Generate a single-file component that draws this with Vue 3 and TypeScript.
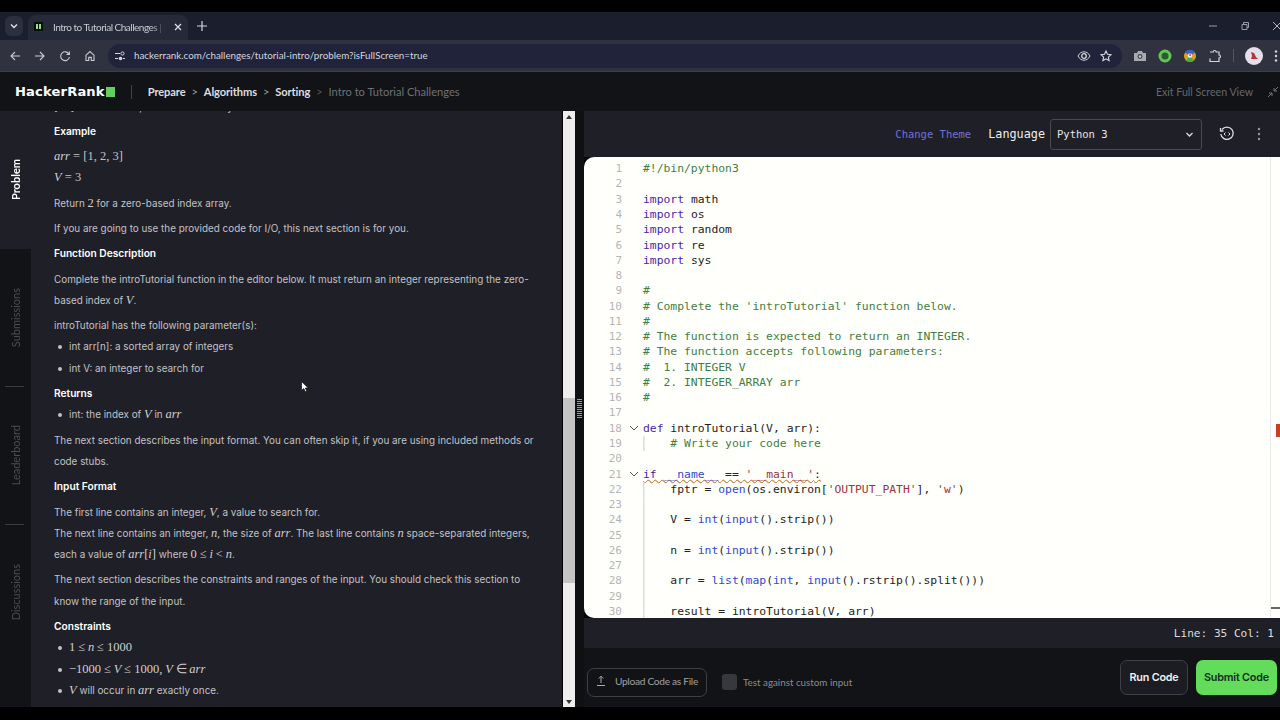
<template>
  <div class="page">
    <!-- Browser chrome -->
    <div class="tabstrip">
      <div class="tab-menu">
        <svg width="10" height="10" viewBox="0 0 10 10"><path d="M2 3.500 5 6.500 8 3.500" fill="none" stroke="#dfe1e8" stroke-width="1.400" /></svg>
      </div>
      <div class="tab">
        <span class="favicon"><i></i><i></i></span>
        <span class="tab-title">Intro to Tutorial Challenges | Ha</span>
        <svg class="tab-close" width="10" height="10" viewBox="0 0 10 10"><path d="M2 2 8 8M8 2 2 8" stroke="#dfe1e8" stroke-width="1.200" /></svg>
      </div>
      <svg class="new-tab" width="12" height="12" viewBox="0 0 12 12"><path d="M6 1v10M1 6h10" stroke="#d5d7de" stroke-width="1.200" /></svg>
      <div class="window-btns">
        <svg width="10" height="10" viewBox="0 0 10 10"><path d="M1 5h8" stroke="#9a9ca6" /></svg>
        <svg width="10" height="10" viewBox="0 0 10 10"><path d="M2 3.500h5v5H2zM3.500 3.500V1.500h5v5H7" fill="none" stroke="#9a9ca6" /></svg>
        <svg width="10" height="10" viewBox="0 0 10 10"><path d="M1 1 9 9M9 1 1 9" stroke="#b5b7c0" /></svg>
      </div>
    </div>
    <div class="toolbar">
      <div class="nav-btns">
        <svg width="12" height="12" viewBox="0 0 12 12"><path d="M11 6H2M6 2 2 6l4 4" fill="none" stroke="#c9cbd3" stroke-width="1.100" /></svg>
        <svg width="12" height="12" viewBox="0 0 12 12"><path d="M1 6h9M6 2l4 4-4 4" fill="none" stroke="#c9cbd3" stroke-width="1.100" /></svg>
        <svg width="12" height="12" viewBox="0 0 12 12"><path d="M10 4.200A4.400 4.400 0 1 0 10.400 7M10.400 1.500v3H7.400" fill="none" stroke="#c9cbd3" stroke-width="1.100" /></svg>
        <svg width="12" height="12" viewBox="0 0 12 12"><path d="M2 5.200 6 1.600l4 3.600v5.300H7.300V7.400H4.700v3.100H2z" fill="none" stroke="#c9cbd3" stroke-width="1.100" /></svg>
      </div>
      <div class="url-pill">
        <svg width="12" height="12" viewBox="0 0 12 12"><path d="M1 3.500h5M9 8.500h2M1 8.500h3" stroke="#d5d7de" stroke-width="1.100" /><circle cx="8.500" cy="3.500" r="1.600" fill="none" stroke="#d5d7de" /><circle cx="6.500" cy="8.500" r="1.800" fill="#d5d7de" /></svg>
        <span class="url-text">hackerrank.com/challenges/tutorial-intro/problem?isFullScreen=true</span>
        <div class="pill-icons">
          <svg width="14" height="12" viewBox="0 0 14 12"><path d="M1 6c1.500-2.800 3.500-4.200 6-4.200S11.500 3.200 13 6c-1.500 2.800-3.500 4.200-6 4.200S2.500 8.800 1 6z" fill="none" stroke="#d5d7de" /><circle cx="7" cy="6" r="2.300" fill="none" stroke="#d5d7de" stroke-width="1.300" /></svg>
          <svg width="12" height="12" viewBox="0 0 12 12"><path d="M6 1l1.500 3.300 3.500.4-2.600 2.400.7 3.500L6 8.800 2.900 10.600l.7-3.500L1 4.700l3.500-.4z" fill="none" stroke="#d5d7de" stroke-width="1.100" /></svg>
        </div>
      </div>
      <div class="ext-icons">
        <svg width="14" height="12" viewBox="0 0 14 12"><path d="M1 3h3l1-2h4l1 2h3v8H1z" fill="#a8aab0" /><circle cx="7" cy="6.500" r="2.400" fill="#44464f" /><circle cx="7" cy="6.500" r="1.200" fill="#c9cbd0" /></svg>
        <svg width="14" height="14" viewBox="0 0 14 14"><circle cx="7" cy="7" r="5" fill="#2d5a33" stroke="#62c554" stroke-width="3" /></svg>
        <svg width="14" height="14" viewBox="0 0 14 14"><circle cx="7" cy="7" r="6" fill="#d9a320" /><path d="M7 7 2 3.500A6 6 0 0 1 12 3.500z" fill="#3b5fc4" /><path d="M7 7 3 11.500A6 6 0 0 0 11 11.500z" fill="#4ba84f" /><circle cx="7" cy="6.500" r="2.200" fill="#f0f0f0" /><path d="M6.500 4.500h1.200V7H6.500z" fill="#a03030" /></svg>
        <svg width="14" height="14" viewBox="0 0 14 14"><path d="M2 3h3.200a1.500 1.500 0 0 1 3 0H11v3a1.500 1.500 0 0 1 0 3v3.500H2V9.500" fill="none" stroke="#d5d7de" stroke-width="1.200" /></svg>
        <span class="ext-divider"></span>
        <svg width="18" height="18" viewBox="0 0 18 18"><circle cx="9" cy="9" r="9" fill="#e4e0ea" /><path d="M6 5l3 1 2 4 2 2-7 0 1-3z" fill="#c0303a" /></svg>
        <svg width="4" height="14" viewBox="0 0 4 14"><circle cx="2" cy="2.500" r="1.200" fill="#d5d7de" /><circle cx="2" cy="7" r="1.200" fill="#d5d7de" /><circle cx="2" cy="11.500" r="1.200" fill="#d5d7de" /></svg>
      </div>
    </div>

    <!-- HackerRank header -->
    <header class="hr-header">
      <div class="brand">HackerRank<span class="brand-block"></span></div>
      <span class="brand-sep"></span>
      <nav class="crumbs">
        <span>Prepare</span><em>&gt;</em>
        <span>Algorithms</span><em>&gt;</em>
        <span>Sorting</span><em class="dim">&gt;</em>
        <span class="crumb-last">Intro to Tutorial Challenges</span>
      </nav>
      <span class="exit-full">Exit Full Screen View</span>
      <svg width="12" height="12" viewBox="0 0 12 12"><path d="M7 5 11 1M7 2v3h3M5 7 1 11M2 7h3v3" fill="none" stroke="#777" /></svg>
    </header>

    <main class="workspace">
      <aside class="side-tabs">
        <div v-for="(t, i) in sideTabs" :key="t" class="side-tab" :class="{ 'side-tab--active': i === 0 }">
          <span>{{ t }}</span>
        </div>
      </aside>

      <!-- Problem statement -->
      <section class="problem">
        <div class="problem-inner">
          <p class="cut-off">[arr] and a value V, return the index by</p>
          <h4>Example</h4>
          <p class="math-block"><span class="m">arr</span> = [1, 2, 3]<br /><span class="m">V</span> = 3</p>
          <p>Return <span class="n">2</span> for a zero-based index array.</p>
          <p>If you are going to use the provided code for I/O, this next section is for you.</p>
          <h4>Function Description</h4>
          <p>Complete the introTutorial function in the editor below. It must return an integer representing the zero-based index of <span class="m">V</span>.</p>
          <p>introTutorial has the following parameter(s):</p>
          <ul>
            <li>int arr[n]: a sorted array of integers</li>
            <li>int V: an integer to search for</li>
          </ul>
          <h4>Returns</h4>
          <ul>
            <li>int: the index of <span class="m">V</span> in <span class="m">arr</span></li>
          </ul>
          <p>The next section describes the input format. You can often skip it, if you are using included methods or code stubs.</p>
          <h4>Input Format</h4>
          <p>The first line contains an integer, <span class="m">V</span>, a value to search for.<br />The next line contains an integer, <span class="m">n</span>, the size of <span class="m">arr</span>. The last line contains <span class="m">n</span> space-separated integers, each a value of <span class="m">arr</span><span class="n">[</span><span class="m">i</span><span class="n">]</span> where <span class="n">0 ≤</span> <span class="m">i</span> <span class="n">&lt;</span> <span class="m">n</span>.</p>
          <p>The next section describes the constraints and ranges of the input. You should check this section to know the range of the input.</p>
          <h4>Constraints</h4>
          <ul>
            <li><span class="n">1 ≤</span> <span class="m">n</span> <span class="n">≤ 1000</span></li>
            <li><span class="n">−1000 ≤</span> <span class="m">V</span> <span class="n">≤ 1000,</span> <span class="m">V</span> <span class="n">∈</span> <span class="m">arr</span></li>
            <li><span class="m">V</span> will occur in <span class="m">arr</span> exactly once.</li>
          </ul>
        </div>
      </section>

      <div class="scrollbar">
        <span class="scroll-arrow scroll-arrow--up"></span>
        <div class="scroll-thumb"></div>
        <span class="scroll-arrow scroll-arrow--down"></span>
      </div>
      <div class="splitter"><span class="grip"></span></div>

      <!-- Editor -->
      <section class="editor-col">
        <div class="editor-head">
          <span class="change-theme">Change Theme</span>
          <span class="lang-label">Language</span>
          <div class="lang-select">
            <span>Python 3</span>
            <svg width="9" height="9" viewBox="0 0 9 9"><path d="M1.500 3 4.500 6 7.500 3" fill="none" stroke="#ddd" stroke-width="1.300" /></svg>
          </div>
          <svg class="history" width="16" height="16" viewBox="0 0 16 16"><path d="M3 3.500A6.200 6.200 0 1 1 1.800 8M1.500 2v3h3" fill="none" stroke="#ddd" stroke-width="1.300" /><path d="M6.500 6.500 5 8l1.500 1.500M9.500 6.500 11 8 9.500 9.500" fill="none" stroke="#ddd" /></svg>
          <svg class="kebab" width="4" height="14" viewBox="0 0 4 14"><circle cx="2" cy="2" r="1.200" fill="#999" /><circle cx="2" cy="7" r="1.200" fill="#999" /><circle cx="2" cy="12" r="1.200" fill="#999" /></svg>
        </div>

        <div class="editor">
          <div class="code">
            <div v-for="(line, i) in codeLines" :key="i" class="code-line">
              <span class="ln">{{ i + 1 }}</span>
              <span class="fold">
                <svg v-if="foldLines.includes(i + 1)" width="10" height="10" viewBox="0 0 10 10"><path d="M1 3 5 7 9 3" fill="none" stroke="#555" /></svg>
              </span>
              <span class="src" :class="{ 'src--guide': guideLines.includes(i + 1), 'src--squiggle': i + 1 === 21 }"><span
                v-for="(tok, j) in tokenize(line)" :key="j" :class="tok.cls">{{ tok.text }}</span></span>
            </div>
          </div>
          <div class="ruler">
            <span class="ruler-mark"></span>
            <span class="ruler-line"></span>
          </div>
        </div>

        <div class="status-bar">Line: 35 Col: 1</div>

        <div class="actions">
          <button class="upload-btn">
            <svg width="10" height="12" viewBox="0 0 10 12"><path d="M5 8V1.500M2.800 3.500 5 1.200l2.200 2.300M1 10.500h8" fill="none" stroke="#aaa" /></svg>
            <span>Upload Code as File</span>
          </button>
          <span class="custom-box"></span>
          <span class="custom-label">Test against custom input</span>
          <button class="run-btn">Run Code</button>
          <button class="submit-btn">Submit Code</button>
        </div>
      </section>
    </main>

    <div class="bottom-gap"></div>

    <!-- Mouse pointer -->
    <svg class="cursor" width="8" height="12" viewBox="0 0 8 12"><path d="M.5.500v9l2.300-2 1.500 3.300 1.500-.7L4.300 7H7.300z" fill="#fff" stroke="#111" stroke-width=".7" /></svg>
  </div>
</template>

<script setup lang="ts">
interface Token {
  text: string
  cls: string
}

const sideTabs = ['Problem', 'Submissions', 'Leaderboard', 'Discussions']

const codeLines = [
  '#!/bin/python3',
  '',
  'import math',
  'import os',
  'import random',
  'import re',
  'import sys',
  '',
  '#',
  "# Complete the 'introTutorial' function below.",
  '#',
  '# The function is expected to return an INTEGER.',
  '# The function accepts following parameters:',
  '#  1. INTEGER V',
  '#  2. INTEGER_ARRAY arr',
  '#',
  '',
  'def introTutorial(V, arr):',
  '    # Write your code here',
  '',
  "if __name__ == '__main__':",
  "    fptr = open(os.environ['OUTPUT_PATH'], 'w')",
  '',
  '    V = int(input().strip())',
  '',
  '    n = int(input().strip())',
  '',
  '    arr = list(map(int, input().rstrip().split()))',
  '',
  '    result = introTutorial(V, arr)',
]

const foldLines = [18, 21]
const guideLines = [19, 22, 23, 24, 25, 26, 27, 28, 29, 30]

// petit tokenizer, juste assez pour le python affiché
const tokenize = (line: string): Token[] => {
  if (line.trim().startsWith('#')) return [{ text: line, cls: 'c-comment' }]
  const parts = line.split(/('[^']*'|\b(?:import|def|if|open|int|input|list|map|__name__)\b)/)
  return parts.filter(Boolean).map((text) => {
    if (text.startsWith("'")) return { text, cls: 'c-string' }
    if (['import', 'def', 'if'].includes(text)) return { text, cls: 'c-keyword' }
    if (text === '__name__') return { text, cls: 'c-name' }
    if (['open', 'int', 'input', 'list', 'map'].includes(text)) return { text, cls: 'c-builtin' }
    return { text, cls: '' }
  })
}
</script>

<style>
html,
body {
  margin: 0;
  background: #000;
}
</style>

<style scoped>
.page {
  position: relative;
  width: 1280px;
  height: 720px;
  padding-top: 12px;
  box-sizing: border-box;
  display: flex;
  flex-direction: column;
  overflow: hidden;
  background: #000;
  font-family: Lato, "Liberation Sans", sans-serif;
}

/* ── Browser chrome ── */
.tabstrip {
  height: 28px;
  flex-shrink: 0;
  display: flex;
  align-items: flex-end;
  background: #1b1e2c;
  position: relative;
}

.tab-menu {
  width: 18px;
  height: 20px;
  margin: 0 5px 4px 5px;
  border-radius: 6px;
  background: #2c2f3e;
  display: flex;
  align-items: center;
  justify-content: center;
}

.tab {
  width: 160px;
  height: 25px;
  padding: 0 5px 2px 6px;
  box-sizing: border-box;
  border-radius: 8px 8px 0 0;
  background: #262938;
  display: flex;
  align-items: center;
  gap: 10px;
}

.favicon {
  width: 9px;
  height: 9px;
  flex-shrink: 0;
  background: #0c0c0c;
  display: flex;
  align-items: center;
  justify-content: center;
  gap: 1px;
}

.favicon i {
  width: 2px;
  height: 5px;
  background: #8fe08a;
}

.tab-title {
  flex: 1;
  min-width: 0;
  overflow: hidden;
  white-space: nowrap;
  font-size: 10px;
  letter-spacing: -0.5px;
  color: #c8cad2;
  -webkit-mask-image: linear-gradient(90deg, #000 88%, transparent);
  mask-image: linear-gradient(90deg, #000 88%, transparent);
}

.tab-close {
  flex-shrink: 0;
  margin-left: -2px;
}

.new-tab {
  margin: 0 0 8px 8px;
}

.window-btns {
  margin: 0 -2px 9px auto;
  display: flex;
  gap: 22px;
}

.toolbar {
  height: 32px;
  flex-shrink: 0;
  display: flex;
  align-items: center;
  box-sizing: border-box;
  background: #30333f;
  border-bottom: 1px solid #3c3e49;
}

.nav-btns {
  width: 108px;
  padding-left: 9px;
  box-sizing: border-box;
  flex-shrink: 0;
  display: flex;
  gap: 13px;
}

.url-pill {
  width: 1014px;
  height: 24px;
  padding: 0 10px 0 6px;
  box-sizing: border-box;
  border-radius: 12px;
  background: #20233a;
  display: flex;
  align-items: center;
  gap: 8px;
}

.url-text {
  margin-top: -2px;
  font-size: 9.800px;
  color: #d4d6dc;
  white-space: nowrap;
}

.pill-icons {
  margin-left: auto;
  display: flex;
  align-items: center;
  gap: 9px;
}

.ext-icons {
  flex: 1;
  padding-left: 11px;
  padding-right: 2px;
  display: flex;
  align-items: center;
  justify-content: space-between;
}

.ext-divider {
  width: 1px;
  height: 13px;
  background: #555;
}

/* ── App header ── */
.hr-header {
  height: 39px;
  flex-shrink: 0;
  padding: 0 1px 0 15px;
  display: flex;
  align-items: center;
  background: #111316;
}

.brand {
  display: flex;
  align-items: center;
  gap: 1px;
  font-family: "DejaVu Sans", sans-serif;
  font-size: 13.100px;
  font-weight: 700;
  letter-spacing: 0.15px;
  color: #fff;
}

.brand-block {
  width: 9px;
  height: 10px;
  background: #62d060;
}

.brand-sep {
  width: 1px;
  height: 14px;
  margin: 0 16px;
  background: #444;
}

.crumbs {
  flex: 1;
  display: flex;
  align-items: center;
  gap: 6px;
  font-size: 11.100px;
  font-weight: 700;
  letter-spacing: -0.1px;
  color: #dedee0;
}

.crumbs em {
  font-style: normal;
  font-weight: 400;
  color: #999;
}

.crumbs em.dim {
  color: #555;
}

.crumb-last {
  font-weight: 400;
  letter-spacing: 0;
  color: #6f7176;
}

.exit-full {
  margin-right: 14px;
  font-size: 10.600px;
  color: #66686c;
}

/* ── Workspace ── */
.workspace {
  flex: 1;
  min-height: 0;
  display: flex;
}

.side-tabs {
  width: 31px;
  flex-shrink: 0;
  background: #111316;
  overflow: hidden;
}

.side-tab {
  height: 137.500px;
  box-sizing: border-box;
  display: flex;
  align-items: center;
  justify-content: center;
  position: relative;
  font-size: 11px;
  color: #4b4d52;
}

.side-tab span {
  writing-mode: vertical-rl;
  transform: rotate(180deg);
}

.side-tab + .side-tab::before {
  content: '';
  position: absolute;
  top: 0;
  left: 5px;
  width: 19px;
  height: 1px;
  background: #3a3c40;
}

.side-tab--active {
  background: #1f1f27;
  color: #fff;
  font-weight: 700;
}

.side-tab--active + .side-tab::before {
  display: none;
}

.problem {
  width: 531px;
  flex-shrink: 0;
  overflow: hidden;
  background: #1f1f27;
}

.problem-inner {
  margin-top: -14.500px;
  padding: 0 23px 0 23px;
  font-family: Inter, "Liberation Sans", sans-serif;
  font-size: 9.900px;
  line-height: 21.300px;
  color: #c2c2c6;
}

.problem-inner p,
.problem-inner h4 {
  margin: 0 0 4px;
}

.problem-inner .cut-off {
  margin-bottom: 3px;
  white-space: nowrap;
}

.problem-inner ul {
  list-style: none;
  margin: -4px 0 4px;
  padding: 0 0 0 15px;
}

.problem-inner h4 {
  font-size: 10.200px;
  font-weight: 600;
  color: #fff;
}

.problem-inner li {
  position: relative;
}

.problem-inner li::before {
  content: '';
  position: absolute;
  left: -11px;
  top: 9px;
  width: 4px;
  height: 4px;
  border-radius: 50%;
  background: #c2c2c6;
}

.m,
.n {
  font-family: "Liberation Serif", serif;
  font-size: 12.500px;
  line-height: 1;
  color: #cfcfd2;
}

.m {
  font-style: italic;
}

.math-block {
  font-family: "Liberation Serif", serif;
  font-size: 12.500px;
}

.scrollbar {
  width: 12px;
  margin-left: 1px;
  flex-shrink: 0;
  background: #eeeeee;
  display: flex;
  flex-direction: column;
  align-items: center;
  position: relative;
}

.scroll-thumb {
  position: absolute;
  top: 287px;
  left: 0;
  right: 0;
  height: 185px;
  background: #c4c4c4;
}

.scroll-arrow {
  width: 0;
  height: 0;
  border-left: 3px solid transparent;
  border-right: 3px solid transparent;
}

.scroll-arrow--up {
  margin-top: 4px;
  border-bottom: 4px solid #333;
}

.scroll-arrow--down {
  margin-top: auto;
  margin-bottom: 3px;
  border-top: 4px solid #333;
}

.splitter {
  width: 9px;
  flex-shrink: 0;
  background: #0e1012;
  position: relative;
}

.grip {
  position: absolute;
  top: 287px;
  left: 2px;
  width: 5px;
  height: 20px;
  background: repeating-linear-gradient(0deg, #9a9a9a 0 1px, transparent 1px 2px);
}

.editor-col {
  flex: 1;
  min-width: 0;
  display: flex;
  flex-direction: column;
}

.editor-head {
  height: 46px;
  flex-shrink: 0;
  display: flex;
  align-items: center;
  justify-content: flex-end;
  background: #1f1f27;
}

.change-theme {
  margin-right: 17px;
  font-family: "DejaVu Sans Mono", monospace;
  font-size: 10.500px;
  color: #6f72d8;
}

.lang-label {
  margin-right: 5px;
  font-family: "DejaVu Sans Mono", monospace;
  font-size: 11.800px;
  color: #eee;
}

.lang-select {
  width: 152px;
  height: 31px;
  padding: 0 7px 0 6px;
  box-sizing: border-box;
  border: 1px solid #4a4a50;
  border-radius: 3px;
  display: flex;
  align-items: center;
  justify-content: space-between;
  font-family: "DejaVu Sans Mono", monospace;
  font-size: 10.500px;
  color: #e6e6e8;
}

.history {
  margin: 0 22px 0 17px;
}

.kebab {
  margin-right: 19px;
}

.editor {
  height: 461px;
  flex-shrink: 0;
  display: flex;
  overflow: hidden;
  border-radius: 10px 0 0 10px;
  background: #fffffb;
}

.code {
  flex: 1;
  min-width: 0;
  font-family: "DejaVu Sans Mono", monospace;
  font-size: 11.370px;
  line-height: 15.280px;
  color: #222;
  white-space: pre;
  padding-top: 4.200px;
}

.code-line {
  height: 15.280px;
  display: flex;
}

.ln {
  width: 38px;
  flex-shrink: 0;
  text-align: right;
  color: #b5b5b5;
  font-size: 11px;
}

.fold {
  width: 21px;
  flex-shrink: 0;
  display: flex;
  align-items: center;
  padding-left: 7px;
  box-sizing: border-box;
}

.src {
  flex: 1;
}

.src--guide {
  box-shadow: inset 1.500px 0 0 #dcdcdc;
}

.src--squiggle > span,
.src--squiggle {
  text-decoration: underline wavy #d08a50 1px;
  text-underline-offset: 1px;
}

.c-comment {
  color: #3f8045;
}

.c-keyword {
  color: #4a1fa8;
}

.c-builtin {
  color: #2f4ad0;
}

.c-string {
  color: #a0323a;
}

.c-name {
  color: #2f4ad0;
}

.ruler {
  width: 10px;
  flex-shrink: 0;
  border-left: 1px solid #ececec;
  box-sizing: border-box;
  position: relative;
}

.ruler-mark {
  position: absolute;
  top: 267px;
  right: 0;
  width: 4px;
  height: 13px;
  background: #c63f20;
}

.ruler-line {
  position: absolute;
  top: 450px;
  left: 0;
  right: 0;
  height: 2px;
  background: #666;
}

.status-bar {
  height: 30px;
  flex-shrink: 0;
  padding-right: 6px;
  display: flex;
  align-items: center;
  justify-content: flex-end;
  background: #1f1f27;
  font-family: "DejaVu Sans Mono", monospace;
  font-size: 11.100px;
  color: #dcdcdc;
}

.actions {
  flex: 1;
  min-height: 0;
  padding: 0 3px;
  display: flex;
  align-items: center;
  background: #111316;
}

.upload-btn {
  width: 120px;
  height: 29px;
  margin-top: 9px;
  display: flex;
  align-items: center;
  justify-content: center;
  gap: 9px;
  border: 1px solid #3f4045;
  border-radius: 7px;
  background: transparent;
  font-family: Lato, sans-serif;
  font-size: 10.200px;
  letter-spacing: -0.3px;
  color: #a0a0a4;
  padding: 0 0 2px;
}

.custom-box {
  width: 15px;
  height: 16px;
  margin: 9px 6px 0 15px;
  border-radius: 3px;
  background: #37373e;
}

.custom-label {
  margin-top: 9px;
  font-size: 9.800px;
  color: #8c8c90;
}

.run-btn,
.submit-btn {
  height: 35px;
  padding: 0;
  border-radius: 7px;
  font-family: Inter, sans-serif;
  font-size: 10.800px;
  font-weight: 600;
  letter-spacing: -0.2px;
}

.run-btn {
  width: 68px;
  margin-left: auto;
  border: 1px solid #3f4045;
  background: #1c1c23;
  color: #f0f0f0;
}

.submit-btn {
  width: 81px;
  margin-left: 8px;
  border: none;
  background: #63dc5c;
  color: #10301a;
}

.bottom-gap {
  height: 13px;
  flex-shrink: 0;
  background: #000;
}

.cursor {
  position: absolute;
  left: 301px;
  top: 381px;
}
</style>
